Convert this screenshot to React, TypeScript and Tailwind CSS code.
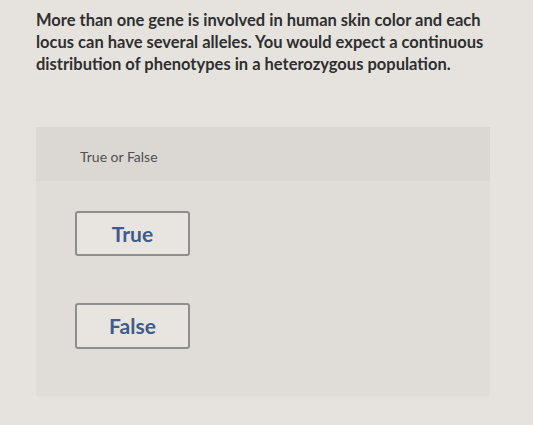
export default function App() {
  return (
    <div className="w-[533px] h-[425px] overflow-hidden bg-[#e6e3df] font-['Lato',sans-serif]">
      <p className="pl-[36px] pt-[9px] w-[520px] text-[16.5px] leading-[22px] font-bold text-[#2f2f2f]">
        More than one gene is involved in human skin color and each
        <br />
        locus can have several alleles. You would expect a continuous
        <br />
        distribution of phenotypes in a heterozygous population.
      </p>

      <div className="ml-[36px] mt-[52px] w-[454px] h-[270px] bg-[#e0ddd9] rounded-sm">
        <div className="h-[54px] bg-[#dbd8d4] pl-[44px] pt-[21px] text-[14px] leading-[18px] text-[#505050]">
          True or False
        </div>
        <div className="pl-[39px] pt-[30px] flex flex-col gap-[47px]">
          <button className="w-[115px] h-[45px] border-2 border-[#8e8e8e] rounded-[3px] bg-[#e8e5e1] text-[21px] font-bold text-[#3f5c8a]">
            True
          </button>
          <button className="w-[115px] h-[46px] border-2 border-[#8e8e8e] rounded-[3px] bg-[#e8e5e1] text-[21px] font-bold text-[#3f5c8a]">
            False
          </button>
        </div>
      </div>
    </div>
  );
}
